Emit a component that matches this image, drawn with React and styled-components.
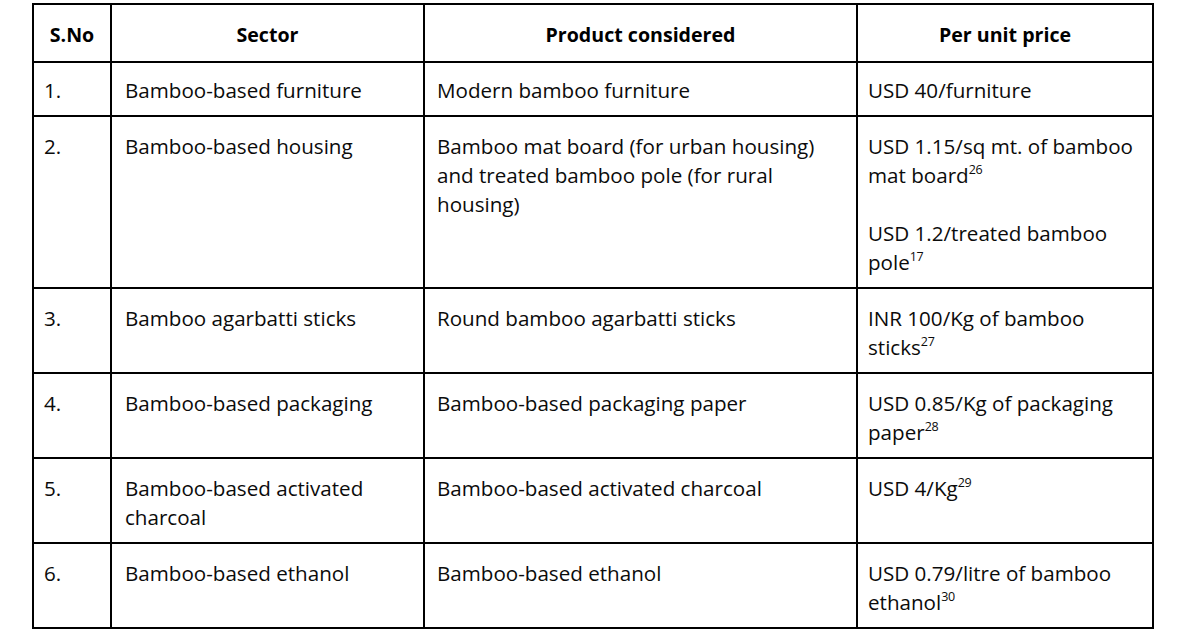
import React from "react";
import styled, { createGlobalStyle } from "styled-components";

const GlobalStyle = createGlobalStyle`
	html, body {
		margin: 0;
		padding: 0;
		background: #ffffff;
	}
	body {
		font-family: "Open Sans", "Liberation Sans", sans-serif;
		color: #000;
	}
`;

const Page = styled.div`
	width: 1200px;
	height: 634px;
	padding: 3px 0 0 32px;
	box-sizing: border-box;
	overflow: hidden;
`;

const Table = styled.div`
	display: grid;
	width: 1122px;
	grid-template-columns: 76px 311px 431px 294px;
	grid-template-rows: 56px 52px 170px 83px 83px 83px 83px;
	gap: 2px;
	padding: 2px;
	box-sizing: border-box;
	background: #000;
`;

const HeadCell = styled.div`
	background: #fff;
	display: flex;
	align-items: center;
	justify-content: center;
	font-weight: 700;
	font-size: 19.6px;
	line-height: 29px;
	padding-top: 2px;
`;

const Cell = styled.div`
	background: #fff;
	font-size: 20.6px;
	line-height: 29px;
	padding: ${(p) => (p.$first ? "13px" : "15px")} 10px 0 ${(p) => p.$left || 12}px;
	color: #0b0b0b;
`;

const Para = styled.p`
	margin: 0;
	& + & {
		margin-top: 29px;
	}
`;

const Sup = styled.sup`
	font-size: 12.5px;
	line-height: 0;
	position: relative;
	top: -1px;
	letter-spacing: -0.3px;
`;

const rows = [
	{
		no: "1.",
		sector: "Bamboo-based furniture",
		product: "Modern bamboo furniture",
		price: [["USD 40/furniture"]],
	},
	{
		no: "2.",
		sector: "Bamboo-based housing",
		product: "Bamboo mat board (for urban housing) and treated bamboo pole (for rural housing)",
		price: [
			["USD 1.15/sq mt. of bamboo mat board", "26"],
			["USD 1.2/treated bamboo pole", "17"],
		],
	},
	{
		no: "3.",
		sector: "Bamboo agarbatti sticks",
		product: "Round bamboo agarbatti sticks",
		price: [["INR 100/Kg of bamboo sticks", "27"]],
	},
	{
		no: "4.",
		sector: "Bamboo-based packaging",
		product: "Bamboo-based packaging paper",
		price: [["USD 0.85/Kg of packaging paper", "28"]],
	},
	{
		no: "5.",
		sector: "Bamboo-based activated charcoal",
		product: "Bamboo-based activated charcoal",
		price: [["USD 4/Kg", "29"]],
	},
	{
		no: "6.",
		sector: "Bamboo-based ethanol",
		product: "Bamboo-based ethanol",
		price: [["USD 0.79/litre of bamboo ethanol", "30"]],
	},
];

export default function App() {
	return (
		<>
			<GlobalStyle />
			<Page>
				<Table>
					<HeadCell>S.No</HeadCell>
					<HeadCell>Sector</HeadCell>
					<HeadCell>Product considered</HeadCell>
					<HeadCell>Per unit price</HeadCell>
					{rows.map((r, i) => (
						<React.Fragment key={r.no}>
							<Cell $first={i === 0} $left={10}>{r.no}</Cell>
							<Cell $first={i === 0} $left={13}>{r.sector}</Cell>
							<Cell $first={i === 0} $left={12}>{r.product}</Cell>
							<Cell $first={i === 0} $left={10}>
								{r.price.map(([text, note]) => (
									<Para key={text}>
										{text}
										{note && <Sup>{note}</Sup>}
									</Para>
								))}
							</Cell>
						</React.Fragment>
					))}
				</Table>
			</Page>
		</>
	);
}
